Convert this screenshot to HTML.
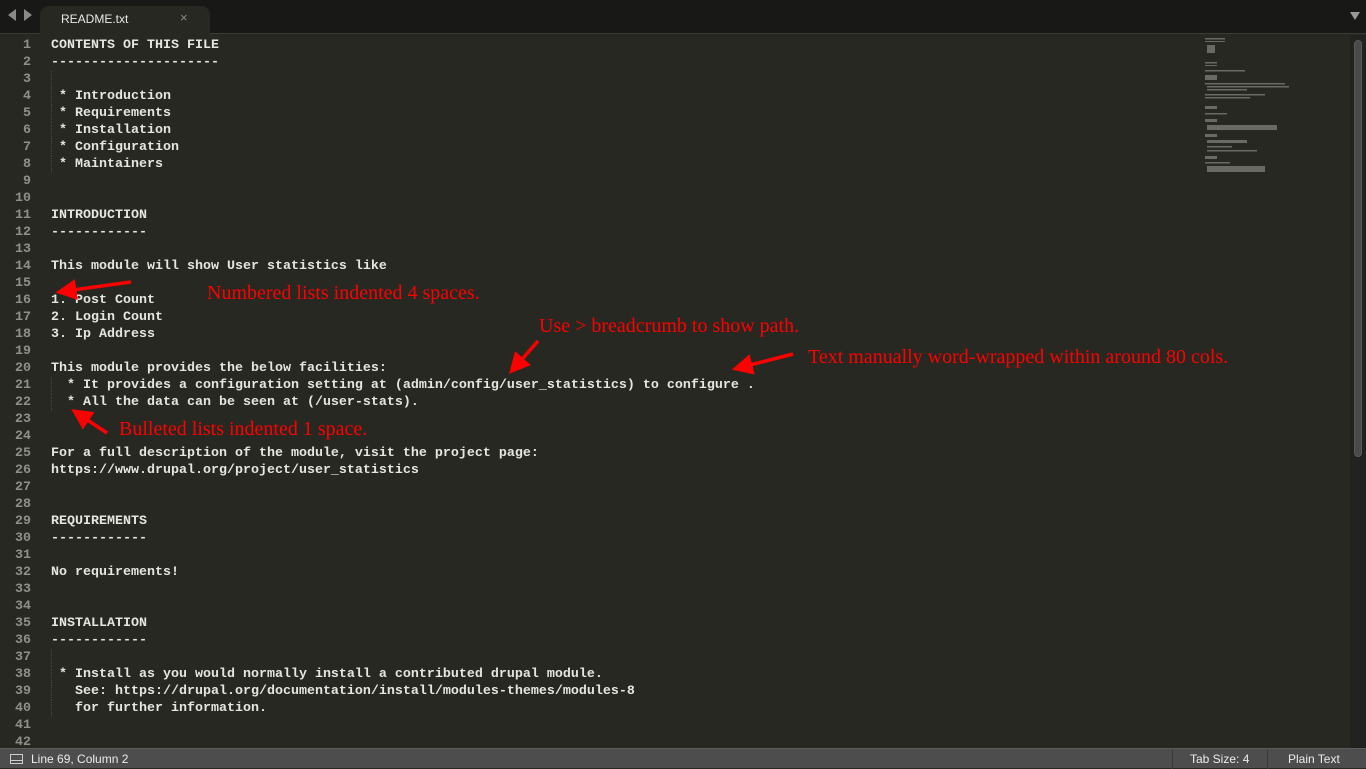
<!DOCTYPE html>
<html><head><meta charset="utf-8"><style>
*{margin:0;padding:0;box-sizing:border-box}
body{width:1366px;height:768px;overflow:hidden;background:#272822;position:relative;font-family:"Liberation Mono",monospace}
#tabbar{position:absolute;left:0;top:0;width:1366px;height:34px;background:#181816;border-bottom:1px solid #3a3a36}
#tab{position:absolute;left:40px;top:6px;width:170px;height:29px;background:#272822;border-radius:9px 9px 0 0}
#tab span{position:absolute;left:21px;top:6px;font:12px "Liberation Sans",sans-serif;color:#e8e8e8}
#tab i{position:absolute;left:140px;top:4px;font:normal 13px "Liberation Sans",sans-serif;color:#8a8a8a}
.nav{position:absolute;top:9px;width:0;height:0;border-top:6px solid transparent;border-bottom:6px solid transparent}
#code{position:absolute;left:0;top:37px;width:1200px}
.l{height:17px;line-height:17px;font-size:13.33px;white-space:pre;position:relative;font-weight:bold}
.n{position:absolute;left:0;width:31px;text-align:right;color:#8f908a;font-weight:bold}
.t{position:absolute;left:51px;color:#e6e6e0}
.g{position:absolute;top:0;height:17px;border-left:1px dotted #4a4a44}
#status{position:absolute;left:0;top:748px;width:1366px;height:20px;background:#4d4d4d;border-top:1px solid #5d5d5d;font:12px "Liberation Sans",sans-serif;color:#ececec}
#status span{position:absolute;top:3px}
.sep{position:absolute;top:0;width:1px;height:20px;background:#3a3a3a}
#track{position:absolute;left:1350px;top:35px;width:16px;height:713px;background:#222220}
#thumb{position:absolute;left:1354px;top:40px;width:8px;height:417px;background:#4a4a48;border-radius:4px;border:1px solid #5a5a56}
.a{position:absolute;font-family:"Liberation Serif",serif;font-size:20px;color:#f00;white-space:nowrap}
</style></head><body>
<div id="tabbar">
<div class="nav" style="left:8px;border-right:8px solid #8a8a8a"></div>
<div class="nav" style="left:24px;border-left:8px solid #8a8a8a"></div>
<div id="tab"><span>README.txt</span><i>×</i></div>
<div style="position:absolute;left:1350px;top:12px;width:0;height:0;border-left:5px solid transparent;border-right:5px solid transparent;border-top:8px solid #999"></div>
</div>
<div id="code">
<div class="l"><span class="n">1</span><span class="t">CONTENTS OF THIS FILE</span></div>
<div class="l"><span class="n">2</span><span class="t">---------------------</span></div>
<div class="l"><span class="n">3</span><span class="g" style="left:51px"></span></div>
<div class="l"><span class="n">4</span><span class="g" style="left:51px"></span><span class="t"> * Introduction</span></div>
<div class="l"><span class="n">5</span><span class="g" style="left:51px"></span><span class="t"> * Requirements</span></div>
<div class="l"><span class="n">6</span><span class="g" style="left:51px"></span><span class="t"> * Installation</span></div>
<div class="l"><span class="n">7</span><span class="g" style="left:51px"></span><span class="t"> * Configuration</span></div>
<div class="l"><span class="n">8</span><span class="g" style="left:51px"></span><span class="t"> * Maintainers</span></div>
<div class="l"><span class="n">9</span></div>
<div class="l"><span class="n">10</span></div>
<div class="l"><span class="n">11</span><span class="t">INTRODUCTION</span></div>
<div class="l"><span class="n">12</span><span class="t">------------</span></div>
<div class="l"><span class="n">13</span></div>
<div class="l"><span class="n">14</span><span class="t">This module will show User statistics like</span></div>
<div class="l"><span class="n">15</span></div>
<div class="l"><span class="n">16</span><span class="t">1. Post Count</span></div>
<div class="l"><span class="n">17</span><span class="t">2. Login Count</span></div>
<div class="l"><span class="n">18</span><span class="t">3. Ip Address</span></div>
<div class="l"><span class="n">19</span></div>
<div class="l"><span class="n">20</span><span class="t">This module provides the below facilities:</span></div>
<div class="l"><span class="n">21</span><span class="g" style="left:51px"></span><span class="t">  * It provides a configuration setting at (admin/config/user_statistics) to configure .</span></div>
<div class="l"><span class="n">22</span><span class="g" style="left:51px"></span><span class="t">  * All the data can be seen at (/user-stats).</span></div>
<div class="l"><span class="n">23</span></div>
<div class="l"><span class="n">24</span></div>
<div class="l"><span class="n">25</span><span class="t">For a full description of the module, visit the project page:</span></div>
<div class="l"><span class="n">26</span><span class="t">https://www.drupal.org/project/user_statistics</span></div>
<div class="l"><span class="n">27</span></div>
<div class="l"><span class="n">28</span></div>
<div class="l"><span class="n">29</span><span class="t">REQUIREMENTS</span></div>
<div class="l"><span class="n">30</span><span class="t">------------</span></div>
<div class="l"><span class="n">31</span></div>
<div class="l"><span class="n">32</span><span class="t">No requirements!</span></div>
<div class="l"><span class="n">33</span></div>
<div class="l"><span class="n">34</span></div>
<div class="l"><span class="n">35</span><span class="t">INSTALLATION</span></div>
<div class="l"><span class="n">36</span><span class="t">------------</span></div>
<div class="l"><span class="n">37</span><span class="g" style="left:51px"></span></div>
<div class="l"><span class="n">38</span><span class="g" style="left:51px"></span><span class="t"> * Install as you would normally install a contributed drupal module.</span></div>
<div class="l"><span class="n">39</span><span class="g" style="left:51px"></span><span class="t">   See: https://drupal.org/documentation/install/modules-themes/modules-8</span></div>
<div class="l"><span class="n">40</span><span class="g" style="left:51px"></span><span class="t">   for further information.</span></div>
<div class="l"><span class="n">41</span></div>
<div class="l"><span class="n">42</span></div>
</div>
<svg style="position:absolute;left:1205px;top:38px" width="140" height="140">
<g fill="#6a6a64">
<rect x="0" y="0" width="20" height="1.5"/><rect x="0" y="3" width="20" height="1"/>
<rect x="2" y="7" width="8" height="8"/>
<rect x="0" y="24" width="12" height="1.5"/><rect x="0" y="27" width="12" height="1"/>
<rect x="0" y="32" width="40" height="1.5"/>
<rect x="0" y="37" width="12" height="5"/>
<rect x="0" y="45" width="80" height="1.5"/><rect x="2" y="48" width="82" height="1.5"/><rect x="2" y="51" width="40" height="1.5"/>
<rect x="0" y="56" width="60" height="1.5"/><rect x="0" y="59" width="45" height="1.5"/>
<rect x="0" y="68" width="12" height="3"/><rect x="0" y="75" width="22" height="1.5"/>
<rect x="0" y="81" width="12" height="3"/><rect x="2" y="87" width="70" height="5"/>
<rect x="0" y="96" width="12" height="3"/><rect x="2" y="102" width="40" height="3"/>
<rect x="2" y="108" width="25" height="1.5"/><rect x="2" y="112" width="50" height="1.5"/>
<rect x="0" y="118" width="12" height="3"/><rect x="0" y="124" width="25" height="1.5"/>
<rect x="2" y="128" width="58" height="6"/>
</g></svg>
<div id="track"></div><div id="thumb"></div>
<div class="a" style="left:207px;top:282px">Numbered lists indented 4 spaces.</div>
<div class="a" style="left:539px;top:315px">Use &gt; breadcrumb to show path.</div>
<div class="a" style="left:808px;top:346px">Text manually word-wrapped within around 80 cols.</div>
<div class="a" style="left:119px;top:418px">Bulleted lists indented 1 space.</div>
<svg style="position:absolute;left:0;top:0" width="1366" height="768">
<defs><marker id="ah" markerWidth="6" markerHeight="6" refX="3" refY="3" orient="auto"><path d="M0,0 L6,3 L0,6 z" fill="#f00"/></marker></defs>
<g stroke="#f00" stroke-width="3.5" marker-end="url(#ah)" fill="none">
<line x1="131" y1="282" x2="66" y2="291"/>
<line x1="538" y1="341" x2="516" y2="366"/>
<line x1="793" y1="354" x2="742" y2="367"/>
<line x1="107" y1="433" x2="80" y2="415"/>
</g></svg>
<div id="status">
<svg style="position:absolute;left:10px;top:5px" width="13" height="10"><rect x="0.5" y="0.5" width="12" height="9" fill="none" stroke="#ccc"/><line x1="0" y1="6.5" x2="13" y2="6.5" stroke="#ccc"/></svg>
<span style="left:31px">Line 69, Column 2</span>
<div class="sep" style="left:1172px"></div>
<span style="left:1190px">Tab Size: 4</span>
<div class="sep" style="left:1267px"></div>
<span style="left:1288px">Plain Text</span>
</div>
</body></html>
